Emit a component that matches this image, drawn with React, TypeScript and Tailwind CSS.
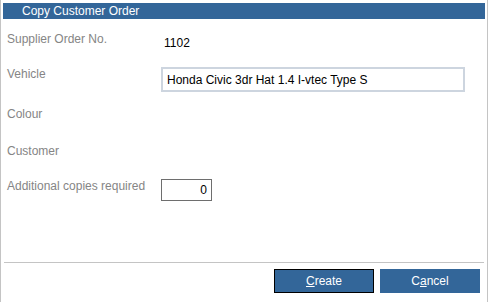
import React from 'react';

export default function App() {
  return (
    <div
      className="w-[488px] h-[302px] bg-white flex flex-col border-l border-r border-[#c4c4c4] px-[2px] pt-[3px] text-[12px]"
      style={{ fontFamily: '"Liberation Sans", Arial, sans-serif' }}
    >
      {/* title */}
      <div className="h-[16px] bg-[#336699] text-white leading-[16px] pl-[19px]">Copy Customer Order</div>

      {/* fields */}
      <div className="flex flex-col pl-[4px]">
        <div className="flex items-start mt-[12px]">
          <div className="w-[154px] h-[16px] leading-[16px] text-[#858585]">Supplier Order No.</div>
          <div className="mt-[4px] h-[16px] leading-[16px] pl-[3px] text-black">1102</div>
        </div>

        <div className="flex items-start mt-[15px]">
          <div className="w-[154px] h-[16px] leading-[16px] text-[#858585]">Vehicle</div>
          <input
            readOnly
            value="Honda Civic 3dr Hat 1.4 I-vtec Type S"
            className="mt-[1px] w-[304px] h-[25px] border-2 border-[#cdd5df] px-[4px] text-black outline-none"
          />
        </div>

        <div className="flex items-start mt-[14px]">
          <div className="w-[154px] h-[16px] leading-[16px] text-[#858585]">Colour</div>
        </div>

        <div className="flex items-start mt-[21px]">
          <div className="w-[154px] h-[16px] leading-[16px] text-[#858585]">Customer</div>
        </div>

        <div className="flex items-start mt-[19px]">
          <div className="w-[154px] h-[16px] leading-[16px] text-[#858585]">Additional copies required</div>
          <input
            readOnly
            value="0"
            className="mt-[1px] w-[51px] h-[22px] border border-[#6e6e6e] px-[4px] text-right text-black outline-none"
          />
        </div>
      </div>

      {/* footer */}
      <div className="mt-auto mx-[1px] border-t border-[#c4c4c4] pt-[6px] pb-[9px] flex justify-end gap-[6px] pr-[4px]">
        <button className="w-[100px] h-[24px] bg-[#336699] border border-black text-white">
          <span className="underline">C</span>reate
        </button>
        <button className="w-[100px] h-[24px] bg-[#336699] text-white">
          C<span className="underline">a</span>ncel
        </button>
      </div>
    </div>
  );
}
